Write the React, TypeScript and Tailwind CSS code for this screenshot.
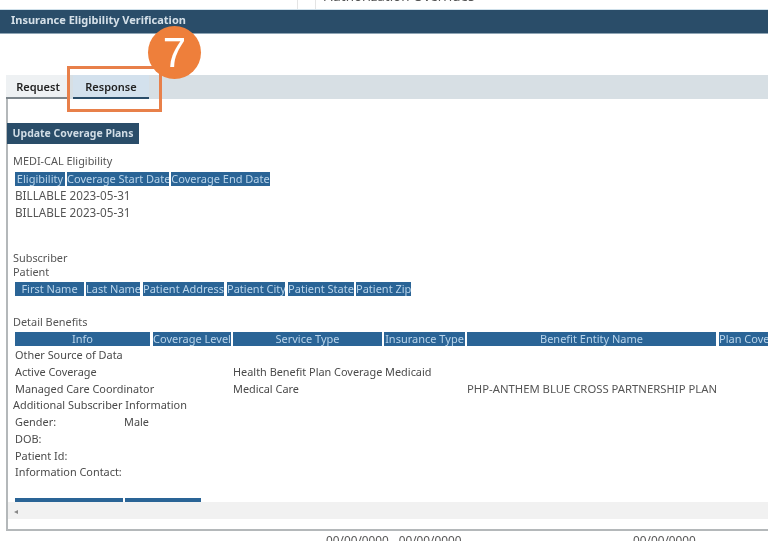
const font = { fontFamily: '"Noto Sans", "Liberation Sans", sans-serif' };

const th = 'bg-[#2a6496] text-[#b9d4ea] text-[11px] leading-[14px] h-[14px] text-center whitespace-nowrap overflow-hidden shrink-0';
const td = 'text-[#4a4a4a] text-[10.9px] leading-[16.7px] h-[16.7px] whitespace-nowrap';
const caps = 'text-[#555] text-[11.7px] leading-[16.7px] h-[16.7px] whitespace-nowrap';
const plan = 'text-[#555] text-[11.3px] leading-[16.7px] h-[16.7px] whitespace-nowrap';
const label = 'text-[#555] text-[10.9px] leading-[14px] whitespace-nowrap';

function HeaderRow({ cols }: { cols: [string, number, number][] }) {
  return (
    <div className="flex ml-[7px]">
      {cols.map(([name, w, gap]) => (
        <div key={name} className={th} style={{ width: w, marginRight: gap }}>{name}</div>
      ))}
    </div>
  );
}

export default function App() {
  return (
    <div className="relative w-[768px] h-[541px] overflow-hidden bg-white blur-[0.5px]" style={font}>
      {/* page behind the dialog */}
      <div className="h-[10px] overflow-hidden flex border-b border-[#cfe0ea]">
        <div className="w-[298px] border-r border-[#e4e4e4]" />
        <div className="w-[18px] border-r border-[#e4e4e4]" />
        <div className="ml-[8px] -mt-[11px] text-[#555] text-[13.4px] leading-[14px]">Authorization Overrides</div>
      </div>

      <div className="h-[24px] bg-[#2a4d69] border-b border-[#8fa5b5] pl-[11px] text-[#d5e0e8] text-[11px] font-bold leading-[20px]">
        Insurance Eligibility Verification
      </div>

      <div className="h-[41px]" />

      <div className="ml-[6px] h-[24px] bg-[#d7dfe4] flex items-stretch">
        <div className="w-[63px] bg-[#eef1f3] border-b-2 border-[#7d868c] pl-[1px] text-center text-[#222] text-[11px] font-semibold leading-[24px]">Request</div>
        <div className="ml-[4px] w-[76px] bg-[#d3e1ed] border-b-2 border-[#2a4d69] text-center text-[#222] text-[11px] font-semibold leading-[24px]">Response</div>
      </div>

      <div className="ml-[6px] h-[432px] border-l-2 border-b-2 border-[#b4b8ba] flex flex-col">
        <div className="mt-[24px] -ml-[1px] w-[132px] h-[21px] bg-[#2a4d69] text-center text-[#d0dce5] text-[10.5px] font-bold leading-[21px]">
          Update Coverage Plans
        </div>

        <div className={label + ' ml-[5px] mt-[10px]'}>MEDI-CAL Eligibility</div>
        <div className="mt-[4px]">
          <HeaderRow cols={[['Eligibility', 50, 2], ['Coverage Start Date', 102, 2], ['Coverage End Date', 99, 0]]} />
        </div>
        <div className="ml-[7px] mt-[1px]">
          <div className={caps}>BILLABLE 2023-05-31</div>
          <div className={caps}>BILLABLE 2023-05-31</div>
        </div>

        <div className={label + ' ml-[5px] mt-[31px]'}>Subscriber</div>
        <div className={label + ' ml-[5px]'}>Patient</div>
        <div className="mt-[3px]">
          <HeaderRow cols={[['First Name', 69, 2], ['Last Name', 54, 3], ['Patient Address', 81, 3], ['Patient City', 58, 3], ['Patient State', 66, 2], ['Patient Zip', 55, 0]]} />
        </div>

        <div className={label + ' ml-[5px] mt-[19px]'}>Detail Benefits</div>
        <div className="mt-[3px]">
          <HeaderRow cols={[['Info', 135, 3], ['Coverage Level', 78, 2], ['Service Type', 149, 2], ['Insurance Type', 81, 2], ['Benefit Entity Name', 249, 3], ['Plan Coverage', 74, 0]]} />
        </div>

        <div className="ml-[7px] mt-[1px] grid grid-cols-[218px_234px_1fr]">
          <div className={td}>Other Source of Data</div>
          <div className={td} />
          <div className={td} />
          <div className={td}>Active Coverage</div>
          <div className={td}>Health Benefit Plan Coverage Medicaid</div>
          <div className={td} />
          <div className={td}>Managed Care Coordinator</div>
          <div className={td}>Medical Care</div>
          <div className={plan}>PHP-ANTHEM BLUE CROSS PARTNERSHIP PLAN</div>
        </div>

        <div className={td + ' ml-[5px]'}>Additional Subscriber Information</div>
        <div className="ml-[7px] grid grid-cols-[109px_1fr]">
          <div className={td}>Gender:</div>
          <div className={td}>Male</div>
          <div className={td}>DOB:</div>
          <div className={td} />
          <div className={td}>Patient Id:</div>
          <div className={td} />
          <div className={td}>Information Contact:</div>
          <div className={td} />
        </div>

        <div className="flex ml-[7px] mt-[17px]">
          <div className="w-[108px] h-[4px] bg-[#2a6496]" />
          <div className="ml-[2px] w-[76px] h-[4px] bg-[#2a6496]" />
        </div>
        <div className="h-[17px] bg-[#f1f1f1] pl-[6px] text-[#888] text-[8px] leading-[17px]">◂</div>
      </div>

      <div className="relative h-[10px] overflow-hidden text-[#555] text-[11.8px] leading-[14px]">
        <span className="absolute left-[326px] top-[2px]">00/00/0000 - 00/00/0000</span>
        <span className="absolute left-[633px] top-[2px]">00/00/0000</span>
      </div>

      {/* step callout */}
      <div className="absolute left-[67px] top-[66px] w-[95px] h-[46px] border-[3px] border-[#e8804a]" />
      <div className="absolute left-[148px] top-[26px] w-[53px] h-[53px] rounded-full bg-[#ee7f3b] flex items-center justify-center text-white text-[42px] leading-none" style={{ fontFamily: '"Liberation Sans", sans-serif' }}>
        7
      </div>
    </div>
  );
}
